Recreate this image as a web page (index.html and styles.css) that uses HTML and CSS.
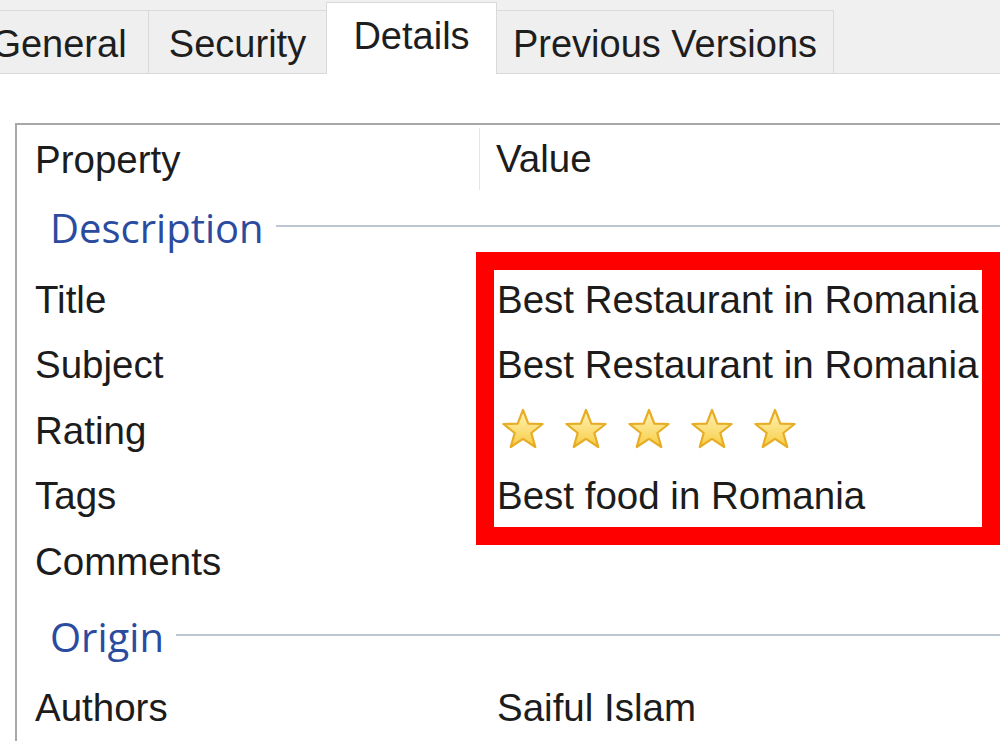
FILE: index.html
```html
<!DOCTYPE html>
<html>
<head>
<meta charset="utf-8">
<link rel="stylesheet" href="styles.css">
</head>
<body>
<div class="page">
  <div class="tabstrip">
    <div class="tabs">
      <div class="tab tab-general">General</div>
      <div class="tab tab-security">Security</div>
      <div class="tab tab-details active">Details</div>
      <div class="tab tab-prev">Previous Versions</div>
    </div>
  </div>
  <div class="panel">
    <div class="listbox">
      <div class="header">
        <div class="hcell hcell-prop">Property</div>
        <div class="hcell hcell-val">Value</div>
      </div>
      <div class="group group-desc">
        <span class="group-title">Description</span>
        <span class="group-line"></span>
      </div>
      <div class="row"><div class="key">Title</div><div class="val">Best Restaurant in Romania</div></div>
      <div class="row"><div class="key">Subject</div><div class="val">Best Restaurant in Romania</div></div>
      <div class="row"><div class="key">Rating</div>
        <div class="val stars">
          <svg class="star" viewBox="0 0 44 42"><defs><linearGradient id="sg" x1="0" y1="0" x2="0" y2="1"><stop offset="0" stop-color="#fff3b8"/><stop offset="1" stop-color="#f8cd45"/></linearGradient></defs><path d="M22 2 L27.3 15.6 L41.6 16 L30.3 25 L34.3 39 L22 30.8 L9.7 39 L13.7 25 L2.4 16 L16.7 15.6 Z" fill="url(#sg)" stroke="#e6ad25" stroke-width="2.2" stroke-linejoin="round"/></svg>
          <svg class="star" viewBox="0 0 44 42"><path d="M22 2 L27.3 15.6 L41.6 16 L30.3 25 L34.3 39 L22 30.8 L9.7 39 L13.7 25 L2.4 16 L16.7 15.6 Z" fill="url(#sg)" stroke="#e6ad25" stroke-width="2.2" stroke-linejoin="round"/></svg>
          <svg class="star" viewBox="0 0 44 42"><path d="M22 2 L27.3 15.6 L41.6 16 L30.3 25 L34.3 39 L22 30.8 L9.7 39 L13.7 25 L2.4 16 L16.7 15.6 Z" fill="url(#sg)" stroke="#e6ad25" stroke-width="2.2" stroke-linejoin="round"/></svg>
          <svg class="star" viewBox="0 0 44 42"><path d="M22 2 L27.3 15.6 L41.6 16 L30.3 25 L34.3 39 L22 30.8 L9.7 39 L13.7 25 L2.4 16 L16.7 15.6 Z" fill="url(#sg)" stroke="#e6ad25" stroke-width="2.2" stroke-linejoin="round"/></svg>
          <svg class="star" viewBox="0 0 44 42"><path d="M22 2 L27.3 15.6 L41.6 16 L30.3 25 L34.3 39 L22 30.8 L9.7 39 L13.7 25 L2.4 16 L16.7 15.6 Z" fill="url(#sg)" stroke="#e6ad25" stroke-width="2.2" stroke-linejoin="round"/></svg>
        </div>
      </div>
      <div class="row"><div class="key">Tags</div><div class="val">Best food in Romania</div></div>
      <div class="row"><div class="key">Comments</div><div class="val"></div></div>
      <div class="group group-origin">
        <span class="group-title">Origin</span>
        <span class="group-line"></span>
      </div>
      <div class="row"><div class="key">Authors</div><div class="val">Saiful Islam</div></div>
    </div>
    <div class="highlight"></div>
  </div>
</div>
</body>
</html>
```

FILE: styles.css
```css
html, body {
  margin: 0;
  padding: 0;
  background: #ffffff;
}
body {
  width: 1000px;
  height: 750px;
  overflow: hidden;
  font-family: "Liberation Sans", Arial, sans-serif;
  font-size: 38.5px;
  color: #1c1c1c;
}
.page {
  position: relative;
  width: 1000px;
  height: 750px;
  overflow: hidden;
}
.tabstrip {
  height: 73px;
  background: #f0f0f0;
  border-bottom: 1px solid #d9d9d9;
  display: flex;
  align-items: flex-end;
}
.tabs {
  display: flex;
  align-items: flex-end;
  margin-left: -30px;
}
.tab {
  box-sizing: border-box;
  height: 63px;
  background: #efefef;
  border-top: 1px solid #dadada;
  border-right: 1px solid #d9d9d9;
  display: flex;
  align-items: center;
  justify-content: center;
  padding-top: 5px;
  color: #1e1e1e;
  white-space: nowrap;
  font-size: 38px;
}
.tab-general { width: 179px; }
.tab-security { width: 178px; }
.tab-details { width: 171px; }
.tab-prev { width: 337px; }
.tab.active {
  height: 72px;
  margin-bottom: -1px;
  background: #ffffff;
  border-top: 1px solid #d9d9d9;
  border-left: 1px solid #d9d9d9;
  margin-left: -1px;
  padding-top: 0;
  padding-bottom: 5px;
  position: relative;
  z-index: 1;
}
.panel {
  position: relative;
  padding: 49px 0 0 15px;
}
.listbox {
  border-top: 2px solid #a8a8a8;
  border-left: 2px solid #a8a8a8;
  width: 1200px;
}
.header {
  display: flex;
  height: 65px;
  align-items: stretch;
}
.hcell {
  display: flex;
  align-items: center;
  white-space: nowrap;
}
.hcell-prop {
  box-sizing: border-box;
  width: 463px;
  padding-left: 18px;
  padding-top: 2px;
  border-right: 1px solid #e6e6e6;
  margin-top: 3px;
}
.hcell-val {
  padding-left: 16px;
  padding-top: 2px;
}
.group {
  display: flex;
  align-items: center;
  color: #2b4b9f;
  font-family: "Open Sans", "Noto Sans", sans-serif;
  font-size: 40px;
}
.group-desc { height: 77px; padding-bottom: 2px; box-sizing: border-box; }
.group-origin { height: 81px; padding-top: 4px; box-sizing: border-box; }
.group-title {
  padding-left: 33px;
  padding-right: 12px;
  white-space: nowrap;
  line-height: 1;
}
.group-line {
  flex: 1;
  height: 2px;
  background: #bcc6d3;
  margin-top: -4px;
}
.row {
  display: flex;
  height: 65.5px;
  align-items: center;
  white-space: nowrap;
}
.key {
  box-sizing: border-box;
  width: 480px;
  padding-left: 18px;
}
.val {
  flex: 1;
}
.stars {
  display: flex;
  gap: 19px;
  padding-left: 4px;
  margin-top: -4px;
}
.star {
  width: 44px;
  height: 42px;
  display: block;
}
.highlight {
  position: absolute;
  left: 476px;
  top: 178px;
  width: 488px;
  height: 257px;
  border: 18px solid #ff0000;
  pointer-events: none;
}
```
